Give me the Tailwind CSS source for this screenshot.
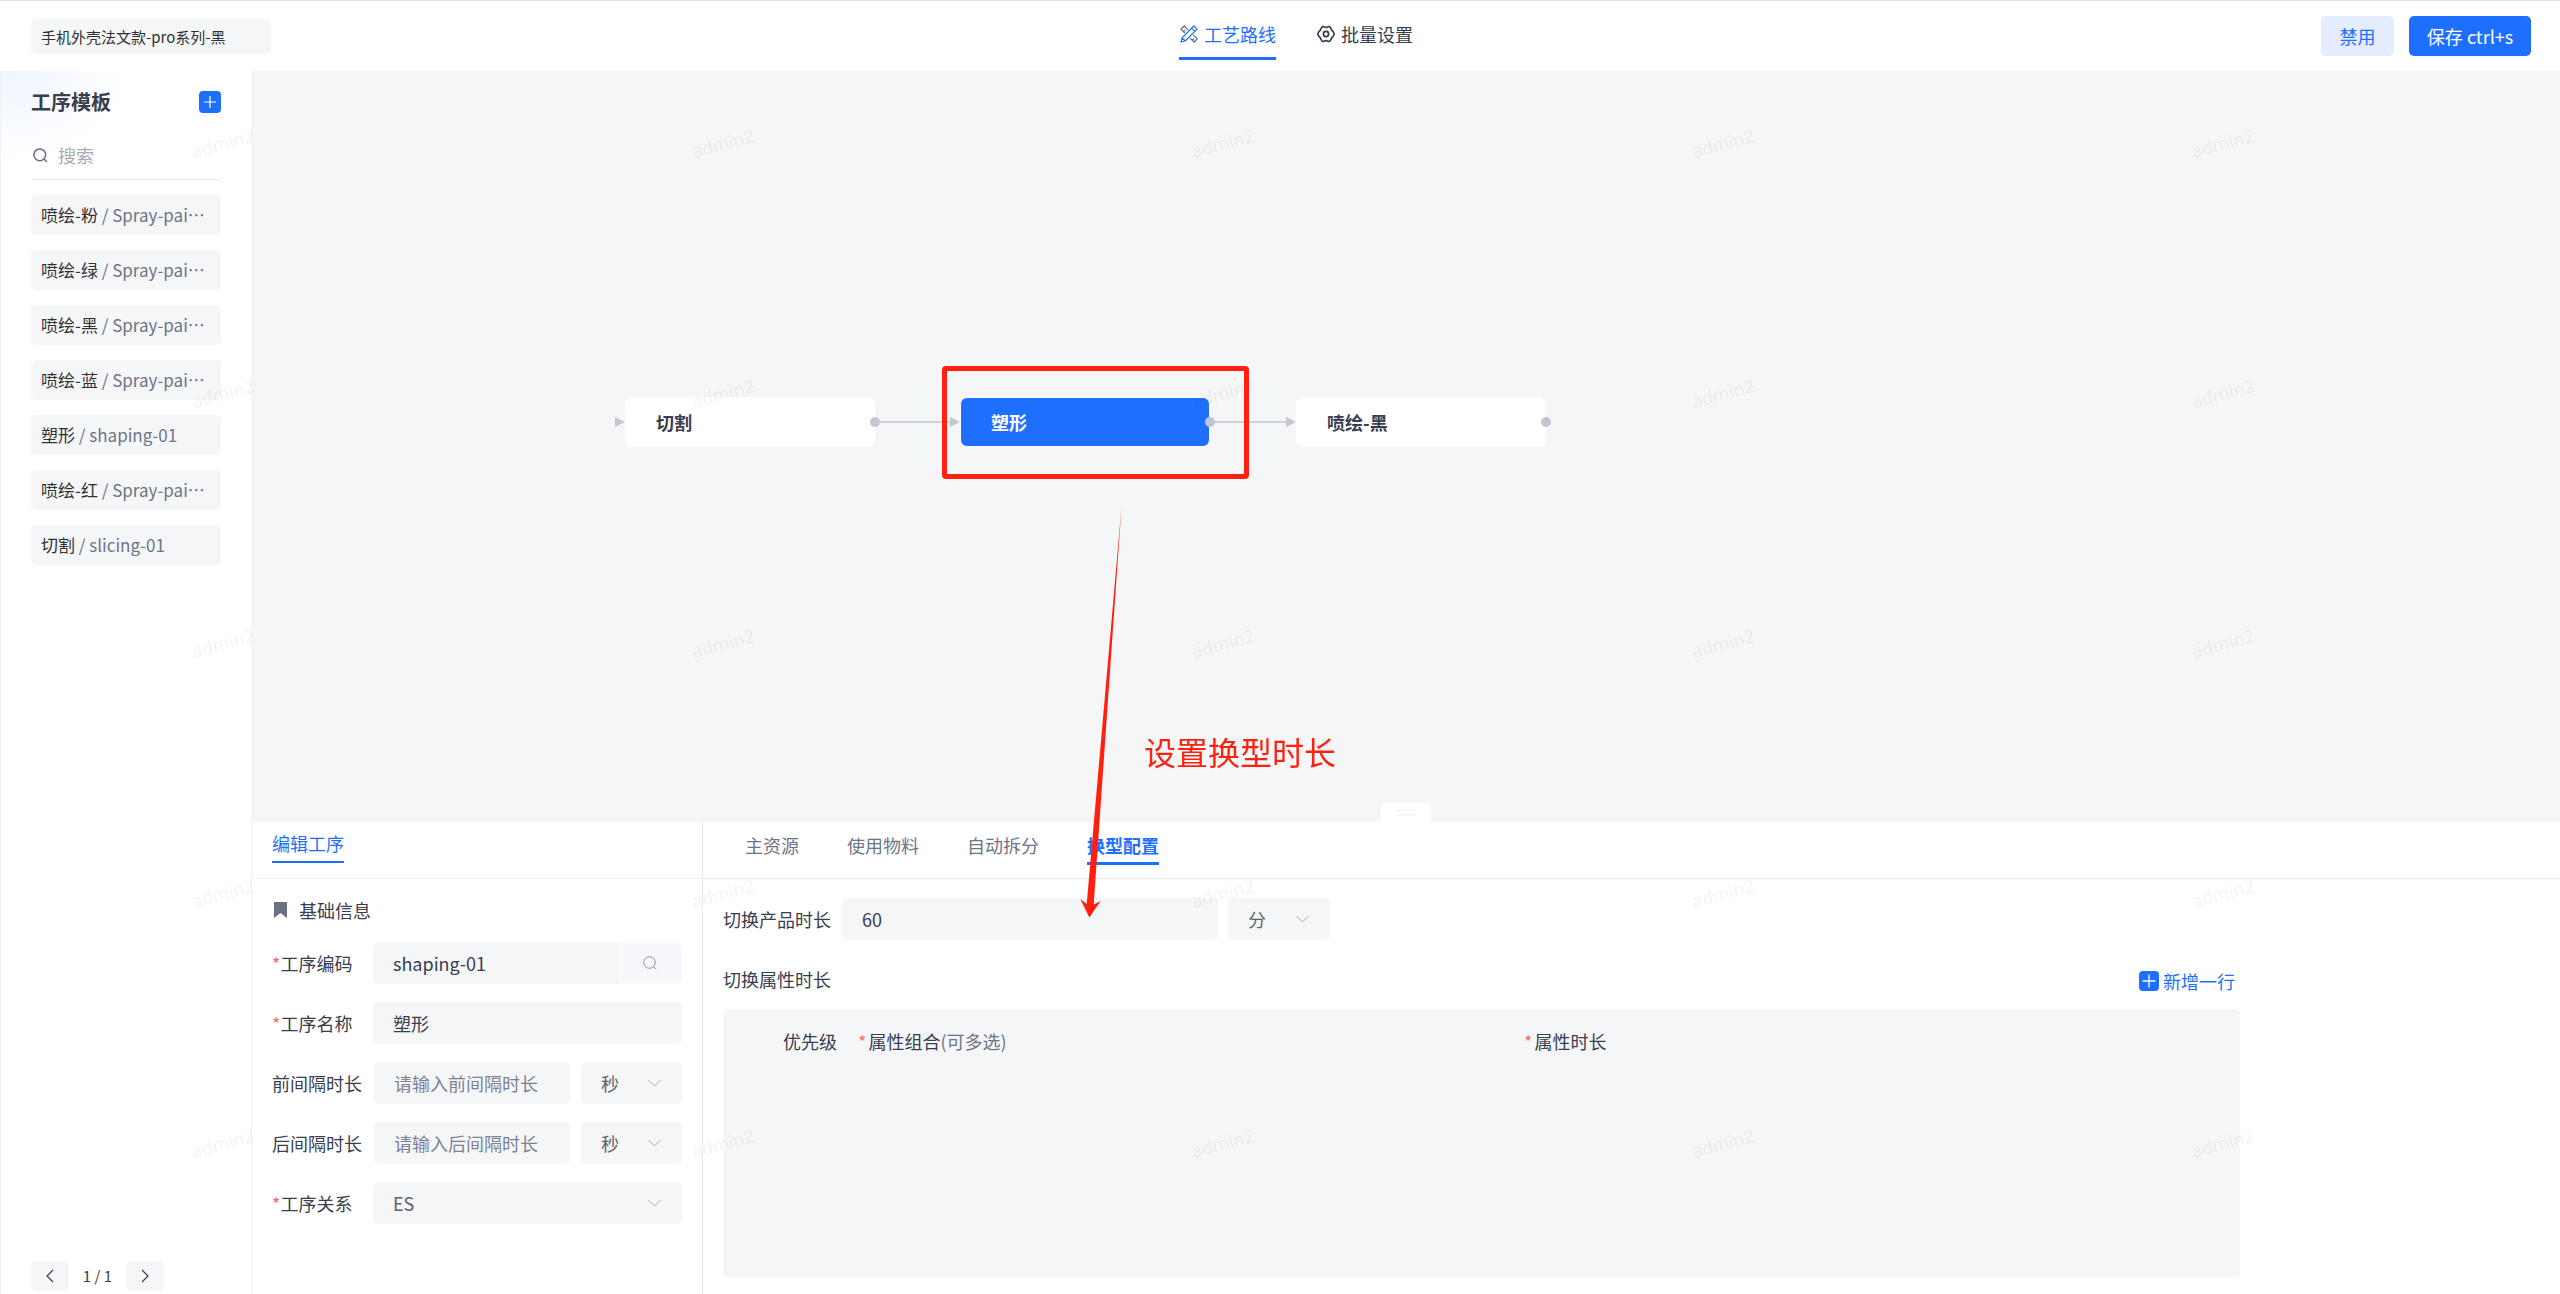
<!DOCTYPE html>
<html lang="zh-CN">
<head>
    <meta charset="UTF-8">
    <meta name="viewport" content="width=device-width, initial-scale=1.0">
    <title>工艺路线</title>

    <!-- Tailwind CSS -->
    <script src="https://cdn.jsdelivr.net/npm/@tailwindcss/browser@4"></script>
</head>
<body class="min-h-screen flex flex-col bg-white font-['Noto_Sans_CJK_SC',sans-serif] text-[18px] leading-6 text-[#3a3d4d]">
    <!-- Top bar -->
    <header class="flex items-center justify-between h-[71px] pl-[31px] pr-[29px] border-t border-[#dedfe1]">
        <input type="text" aria-label="路线名称" value="手机外壳法文款-pro系列-黑" class="w-[240px] h-[35px] px-[10px] rounded-[5px] bg-[#f5f6f8] text-[15px] text-[#303133]">
        <nav class="flex gap-10 self-end pb-[11px]">
            <a href="#" class="flex items-center gap-[5px] h-[46px] pb-[3px] border-b-3 border-[#1f6fff] text-[#1f6fff]">
                <svg class="w-5 h-5" viewBox="0 0 20 20" fill="none" stroke="currentColor" stroke-width="1.2" stroke-linejoin="round">
                    <path d="M5.8 9 2 5.2 5.2 2 9 5.8M11.2 14.2 15 18l3.2-3.2-4-4M4.6 7.6 6.200 6M13.400 16.200l1.600-1.600M15.600 17.800l1.400-1.600" stroke="#5c6a8c"/>
                    <path d="M2 18l1-4.200L14.800 2 18 5.200 6.200 17 2 18zM12.600 4.200l3.200 3.200M3 13.800 6.200 17"/>
                </svg>
                工艺路线
            </a>
            <a href="#" class="flex items-center gap-[5px] h-[46px] pb-[3px] border-b-3 border-transparent">
                <svg class="w-5 h-5" viewBox="0 0 20 20" fill="none" stroke="currentColor" stroke-width="1.7" stroke-linejoin="round">
                    <path d="M6.3 2.6h1.6q2.1 1.5 4.2 0h1.6l1.5 2.3q.2 1.8 1.9 2.6l1.1 2.5-1.1 2.5q-1.7.8-1.9 2.6l-1.5 2.3h-1.6q-2.1-1.5-4.2 0H6.3l-1.5-2.3q-.2-1.8-1.9-2.6L1.8 10l1.1-2.5q1.7-.8 1.9-2.6z"/>
                    <circle cx="10" cy="10" r="2.6"/>
                </svg>
                批量设置
            </a>
        </nav>
        <div class="flex gap-[15px]">
            <button type="button" class="w-[73px] h-10 pb-px rounded-[5px] bg-[#e4edff] text-[#1f6fff]">禁用</button>
            <button type="button" class="w-[122px] h-10 pb-px rounded-[5px] bg-[#1f6fff] text-white">保存 ctrl+s</button>
        </div>
    </header>

    <div class="flex flex-1">
        <!-- Process templates -->
        <aside class="flex flex-col shrink-0 w-[251px] pl-[30px] pr-[30px] pt-[18px] pb-[3px] border-l border-[#f0f1f3] bg-[radial-gradient(130px_90px_at_0_0,#eff5ff,transparent)]">
            <div class="flex items-center justify-between">
                <h2 class="text-[20px] leading-[26px] font-bold">工序模板</h2>
                <button type="button" aria-label="新增模板" class="flex items-center justify-center w-[22px] h-[22px] rounded-[4px] bg-[#1f6fff] text-white">
                    <svg class="w-3 h-3" viewBox="0 0 12 12" fill="none" stroke="currentColor" stroke-width="1.2"><path d="M6 0v12M0 6h12"/></svg>
                </button>
            </div>
            <label class="flex items-center gap-[10px] mt-[20px] h-[45px] pl-[2px] pb-1 border-b border-[#e9eaec] rounded-bl-[4px]">
                <svg class="w-[15px] h-[15px] shrink-0 text-[#6b7085]" viewBox="0 0 15 15" fill="none" stroke="currentColor" stroke-width="1.5"><circle cx="6.8" cy="6.8" r="5.9"/><path d="M10.8 10.8 14 14"/></svg>
                <input type="text" placeholder="搜索" class="w-full text-[18px] placeholder:text-[#a9abb3]">
            </label>
            <ul class="flex flex-col gap-[15px] mt-[15px] text-[17px] text-[#6f7486]">
                <li class="h-10 leading-10 px-[10px] rounded-[5px] bg-[#f5f6f8] truncate"><span class="text-[#303133]">喷绘-粉</span> / Spray-painting-01</li>
                <li class="h-10 leading-10 px-[10px] rounded-[5px] bg-[#f5f6f8] truncate"><span class="text-[#303133]">喷绘-绿</span> / Spray-painting-02</li>
                <li class="h-10 leading-10 px-[10px] rounded-[5px] bg-[#f5f6f8] truncate"><span class="text-[#303133]">喷绘-黑</span> / Spray-painting-03</li>
                <li class="h-10 leading-10 px-[10px] rounded-[5px] bg-[#f5f6f8] truncate"><span class="text-[#303133]">喷绘-蓝</span> / Spray-painting-04</li>
                <li class="h-10 leading-10 px-[10px] rounded-[5px] bg-[#f5f6f8] truncate"><span class="text-[#303133]">塑形</span> / shaping-01</li>
                <li class="h-10 leading-10 px-[10px] rounded-[5px] bg-[#f5f6f8] truncate"><span class="text-[#303133]">喷绘-红</span> / Spray-painting-05</li>
                <li class="h-10 leading-10 px-[10px] rounded-[5px] bg-[#f5f6f8] truncate"><span class="text-[#303133]">切割</span> / slicing-01</li>
            </ul>
            <div class="flex items-center mt-auto text-[15px]">
                <button type="button" aria-label="上一页" class="flex items-center justify-center w-[38px] h-[30px] rounded-[5px] bg-[#f5f6f8]">
                    <svg class="w-2 h-[14px]" viewBox="0 0 8 14" fill="none" stroke="currentColor" stroke-width="1.2"><path d="M7 1 1 7l6 6"/></svg>
                </button>
                <span class="w-[57px] text-center">1 / 1</span>
                <button type="button" aria-label="下一页" class="flex items-center justify-center w-[38px] h-[30px] rounded-[5px] bg-[#f5f6f8]">
                    <svg class="w-2 h-[14px]" viewBox="0 0 8 14" fill="none" stroke="currentColor" stroke-width="1.2"><path d="m1 1 6 6-6 6"/></svg>
                </button>
            </div>
        </aside>

        <main class="flex flex-col flex-1 min-w-0">
            <!-- Flow canvas -->
            <section class="relative flex-1 bg-[#f5f6f8]">
                <svg class="absolute left-0 top-0 w-full h-full" fill="#c3c5d2">
                    <path d="M364 346v10l10-5zM699 346v10l10-5zM1035 346v10l10-5z"/>
                    <path d="M629 351h70M963 351h72" stroke="#c3c5d2" stroke-width="1.5"/>
                </svg>
                <div class="absolute left-[374px] top-[326px] flex items-center w-[250px] h-[50px] pl-[31px] rounded-[7px] bg-white font-bold">切割</div>
                <div class="absolute left-[709px] top-[326px] flex items-center w-[250px] h-[50px] pl-[30px] rounded-[7px] border border-white bg-[#1f6fff] text-white font-bold">塑形</div>
                <div class="absolute left-[1045px] top-[326px] flex items-center w-[250px] h-[50px] pl-[31px] rounded-[7px] bg-white font-bold">喷绘-黑</div>
                <svg class="absolute left-0 top-0 w-full h-full" fill="#c3c5d2">
                    <circle cx="624" cy="351" r="5"/><circle cx="959" cy="351" r="5"/><circle cx="1295" cy="351" r="5"/>
                </svg>
                <!-- Drag handle of the lower panel -->
                <div class="absolute bottom-[-1px] left-1/2 -translate-x-1/2 flex flex-col items-center gap-[3px] w-[50px] h-5 pt-[6px] rounded-t-[4px] bg-white">
                    <i class="w-5 h-[2px] bg-[#f5f6f8]"></i>
                    <i class="w-5 h-[2px] bg-[#f5f6f8]"></i>
                </div>
            </section>

            <section class="flex border-l border-[#f0f1f3]">
                <!-- Edit form -->
                <form class="shrink-0 w-[451px] border-r border-[#e9eaec]">
                    <div class="flex h-[57px] pl-5 border-b border-[#f0f1f3]">
                        <a href="#" class="h-[41px] pt-[9px] border-b-2 border-[#1f6fff] text-[#1f6fff]">编辑工序</a>
                    </div>
                    <div class="flex flex-col gap-[18px] px-5">
                        <h3 class="flex items-center gap-[12px] pl-[2px] mt-[19px] mb-[2px]">
                            <svg class="w-[13px] h-4 text-[#6b7085]" viewBox="0 0 13 16" fill="currentColor"><path d="M0 0h13v16l-6.5-5L0 16z"/></svg>
                            基础信息
                        </h3>
                        <div class="flex items-center">
                            <label for="code" class="w-[101px]"><span class="text-[#f56c6c]">*</span>工序编码</label>
                            <input id="code" type="text" value="shaping-01" class="flex-1 min-w-0 h-[42px] pl-5 rounded-l-[5px] bg-[#f5f6f8]">
                            <button type="button" aria-label="查询编码" class="flex items-center justify-center w-16 h-10 rounded-r-[5px] bg-[#f7f8fc] text-[#90939d]">
                                <svg class="w-[14px] h-[14px]" viewBox="0 0 14 14" fill="none" stroke="currentColor"><circle cx="6.5" cy="6.5" r="5.8"/><path d="m10.5 10.5 2.8 2.8"/></svg>
                            </button>
                        </div>
                        <div class="flex items-center">
                            <label for="name" class="w-[101px]"><span class="text-[#f56c6c]">*</span>工序名称</label>
                            <input id="name" type="text" value="塑形" class="flex-1 min-w-0 h-[42px] pl-5 rounded-[5px] bg-[#f5f6f8]">
                        </div>
                        <div class="flex items-center">
                            <label for="before" class="w-[102px]">前间隔时长</label>
                            <input id="before" type="text" placeholder="请输入前间隔时长" class="flex-1 min-w-0 h-[42px] pl-5 rounded-[5px] bg-[#f5f6f8] placeholder:text-[#7d8194]">
                            <div class="relative w-[101px] ml-[11px]">
                                <select aria-label="前间隔单位" class="appearance-none w-full h-[42px] pl-5 rounded-[5px] bg-[#f5f6f8] text-[#606266]"><option>秒</option></select>
                                <svg class="absolute right-[21px] top-[17px] w-[13px] h-2 pointer-events-none text-[#a8abb2]" viewBox="0 0 13 8" fill="none" stroke="currentColor"><path d="m.5 1 6 6 6-6"/></svg>
                            </div>
                        </div>
                        <div class="flex items-center">
                            <label for="after" class="w-[102px]">后间隔时长</label>
                            <input id="after" type="text" placeholder="请输入后间隔时长" class="flex-1 min-w-0 h-[42px] pl-5 rounded-[5px] bg-[#f5f6f8] placeholder:text-[#7d8194]">
                            <div class="relative w-[101px] ml-[11px]">
                                <select aria-label="后间隔单位" class="appearance-none w-full h-[42px] pl-5 rounded-[5px] bg-[#f5f6f8] text-[#606266]"><option>秒</option></select>
                                <svg class="absolute right-[21px] top-[17px] w-[13px] h-2 pointer-events-none text-[#a8abb2]" viewBox="0 0 13 8" fill="none" stroke="currentColor"><path d="m.5 1 6 6 6-6"/></svg>
                            </div>
                        </div>
                        <div class="flex items-center">
                            <label for="relation" class="w-[101px]"><span class="text-[#f56c6c]">*</span>工序关系</label>
                            <div class="relative flex-1">
                                <select id="relation" class="appearance-none w-full h-[42px] pl-5 rounded-[5px] bg-[#f5f6f8] text-[#606266]"><option>ES</option></select>
                                <svg class="absolute right-[21px] top-[17px] w-[13px] h-2 pointer-events-none text-[#a8abb2]" viewBox="0 0 13 8" fill="none" stroke="currentColor"><path d="m.5 1 6 6 6-6"/></svg>
                            </div>
                        </div>
                    </div>
                </form>

                <!-- Changeover settings -->
                <div class="flex-1 min-w-0">
                    <nav class="flex gap-12 h-[57px] pl-[42px] border-b border-[#e9eaec] text-[#6f7486]">
                        <a href="#" class="pt-[11px]">主资源</a>
                        <a href="#" class="pt-[11px]">使用物料</a>
                        <a href="#" class="pt-[11px]">自动拆分</a>
                        <a href="#" class="h-[43px] pt-[11px] border-b-3 border-[#1f6fff] text-[#1f6fff] font-bold">换型配置</a>
                    </nav>
                    <div class="pl-5 pr-80 pt-[19px] pb-[17px]">
                        <div class="flex items-center">
                            <label for="duration" class="w-[119px]">切换产品时长</label>
                            <input id="duration" type="text" value="60" class="w-[376px] h-[42px] pl-5 rounded-[5px] bg-[#f5f6f8]">
                            <div class="relative w-[102px] ml-[10px]">
                                <select aria-label="时长单位" class="appearance-none w-full h-[42px] pl-5 rounded-[5px] bg-[#f5f6f8] text-[#606266]"><option>分</option></select>
                                <svg class="absolute right-[21px] top-[17px] w-[13px] h-2 pointer-events-none text-[#a8abb2]" viewBox="0 0 13 8" fill="none" stroke="currentColor"><path d="m.5 1 6 6 6-6"/></svg>
                            </div>
                        </div>
                        <div class="flex items-start justify-between mt-[27px]">
                            <span>切换属性时长</span>
                            <button type="button" class="flex items-center gap-1 pt-[2px] pr-[5px] text-[#1f6fff]">
                                <svg class="w-5 h-5" viewBox="0 0 20 20"><rect width="20" height="20" rx="4" fill="currentColor"/><path d="M10 3.5v13M3.5 10h13" stroke="#fff" stroke-width="1.3"/></svg>
                                新增一行
                            </button>
                        </div>
                        <div class="h-[268px] mt-[16px] pt-[20px] rounded-[5px] bg-[#f5f6f8]">
                            <table class="w-full table-fixed text-left">
                                <thead>
                                    <tr>
                                        <th class="w-[135px] pl-[60px] font-normal">优先级</th>
                                        <th class="font-normal"><span class="mr-[2px] text-[#f56c6c]">*</span>属性组合<span class="text-[#6f7486]">(可多选)</span></th>
                                        <th class="w-[716px] font-normal"><span class="mr-[2px] text-[#f56c6c]">*</span>属性时长</th>
                                    </tr>
                                </thead>
                            </table>
                        </div>
                    </div>
                </div>
            </section>
        </main>
    </div>

    <!-- Watermark -->
    <div id="watermark" class="fixed inset-0 overflow-hidden pointer-events-none grid grid-cols-[repeat(auto-fill,500px)] auto-rows-[250px] font-['Noto_Sans',sans-serif] text-black/5">
        <span class="w-fit h-6 ml-[191px] mt-[131px] -rotate-15">admin2</span>
    </div>

    <!-- Annotations -->
    <div class="absolute left-[942px] top-[366px] w-[307px] h-[113px] border-5 border-[#ff2010] rounded-[4px] pointer-events-none"></div>
    <svg class="absolute left-[1080px] top-[505px] w-[42px] h-[413px] pointer-events-none" viewBox="0 0 42 413" fill="#ff2010"><path d="M41.500 2 13.700 399.500l7-3.500L9.300 412.500.3 394l6.400 5z"/></svg>
    <p class="absolute left-[1144px] top-[731px] text-[32px] leading-10 text-[#ff2010] pointer-events-none">设置换型时长</p>

    <script>
        // Repeat the watermark over the whole window
        const layer = document.getElementById('watermark');
        const mark = layer.firstElementChild;
        const count = Math.floor(window.innerWidth / 500) * Math.ceil(window.innerHeight / 250);
        for (let i = 1; i < count; i++) {
            layer.appendChild(mark.cloneNode(true));
        }
    </script>
</body>
</html>
